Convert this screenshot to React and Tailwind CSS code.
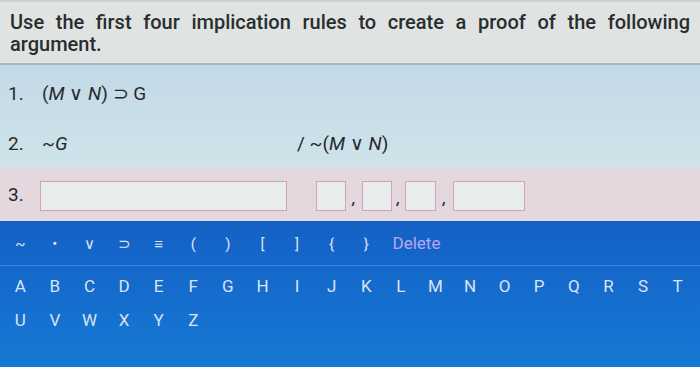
import React from "react";

const row1 = ["~", "•", "∨", "⊃", "≡", "(", ")", "[", "]", "{", "}"];
const letters1 = "ABCDEFGHIJKLMNOPQRST".split("");
const letters2 = "UVWXYZ".split("");

export default function App() {
  return (
    <div className="w-[700px] h-[367px] overflow-hidden flex flex-col" style={{ fontFamily: "Roboto, 'Noto Sans', sans-serif" }}>
      <div className="h-[65px] bg-[#dfe4e2] border-t-[2px] border-[#c9d2d0] border-b-[2px] border-b-[#a6b9c3] px-[10px] pt-[9px] text-[20px] leading-[22px] font-medium text-[#2a2d2f] text-justify">
        Use the first four implication rules to create a proof of the following argument.
      </div>
      <div className="bg-gradient-to-b from-[#c3d9e6] to-[#cfe3ea] h-[103px] flex flex-col text-[19px] text-[#25292d]">
        <div className="h-[55px] flex items-center pl-[8px] pt-[4px]">
          <span className="w-[34px]">1.</span>
          <span>(<i>M</i> ∨ <i>N</i>) ⊃ G</span>
        </div>
        <div className="h-[48px] flex items-center pl-[8px]">
          <span className="w-[34px]">2.</span>
          <span className="w-[255px]">~<i>G</i></span>
          <span>/ ~(<i>M</i> ∨ <i>N</i>)</span>
        </div>
      </div>
      <div className="h-[53px] bg-[#e4d8de] flex items-center pl-[8px] pt-[2px] text-[19px] text-[#25292d]">
        <span className="w-[32px]">3.</span>
        <div className="w-[247px] h-[30px] border border-[#d0a3b3] bg-[#e8edeb]" />
        <div className="w-[29px]" />
        <div className="w-[30px] h-[30px] border border-[#d0a3b3] bg-[#e8ecec]" />
        <span className="w-[16px] text-center text-[14px] font-bold italic self-end mb-[11px]">,</span>
        <div className="w-[30px] h-[30px] border border-[#d0a3b3] bg-[#e8ecec]" />
        <span className="w-[13px] text-center text-[14px] font-bold italic self-end mb-[11px]">,</span>
        <div className="w-[31px] h-[30px] border border-[#d0a3b3] bg-[#e8ecec]" />
        <span className="w-[17px] text-center text-[14px] font-bold italic self-end mb-[11px]">,</span>
        <div className="w-[72px] h-[30px] border border-[#d0a3b3] bg-[#e8ecec]" />
      </div>
      <div className="flex-1 bg-gradient-to-b from-[#1560c6] to-[#1679d4] text-[#dbe4f2] flex flex-col">
        <div className="h-[45px] flex items-center pl-[3px] pt-[2px] border-b border-[#3b86dc]">
          {row1.map((s, i) => (
            <span key={i} className="w-[34.6px] text-center text-[15px]">{s}</span>
          ))}
          <span className="ml-[9px] text-[17px] text-[#b6a8f0]">Delete</span>
        </div>
        <div className="h-[42px] flex items-center pl-[3px]">
          {letters1.map((s) => (
            <span key={s} className="w-[34.6px] text-center text-[17px]">{s}</span>
          ))}
        </div>
        <div className="h-[26px] flex items-center pl-[3px]">
          {letters2.map((s) => (
            <span key={s} className="w-[34.6px] text-center text-[17px]">{s}</span>
          ))}
        </div>
      </div>
    </div>
  );
}
